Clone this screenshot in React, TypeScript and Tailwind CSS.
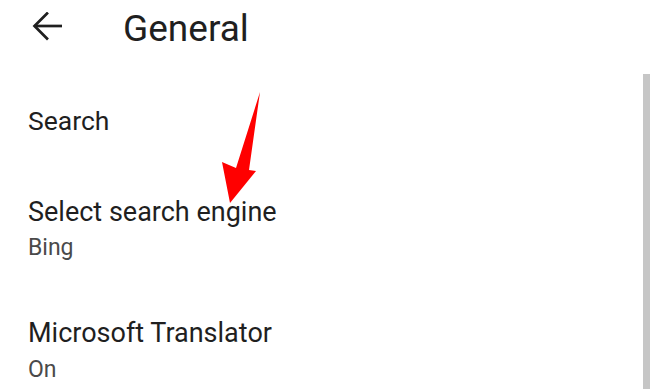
export default function App() {
  return (
    <div className="relative w-[650px] h-[389px] overflow-hidden bg-white text-[#1f1f1f]" style={{ fontFamily: 'Roboto, "Noto Sans", sans-serif' }}>
      <header className="flex items-start pt-[10px]">
        <svg className="ml-[32px] mt-[2px] block" width="32" height="30" viewBox="0 0 32 30" fill="none">
          <path d="M2.5 14H30" stroke="#1f1f1f" strokeWidth="2.7" />
          <path d="M15 1.5L2.5 14L15 26.5" stroke="#1f1f1f" strokeWidth="2.7" strokeLinecap="square" />
        </svg>
        <h1 className="ml-[59px] text-[37px] leading-[37px] font-normal">General</h1>
      </header>
      <main className="flex flex-col pl-[28px]">
        <div className="mt-[60.3px] text-[26.5px] leading-[27px]">Search</div>
        <div className="mt-[65px] text-[27px] leading-[27px]">Select search engine</div>
        <div className="mt-[9.3px] text-[23px] leading-[23px] text-[#4a4a4a]">Bing</div>
        <div className="mt-[61.7px] text-[27px] leading-[27px]">Microsoft Translator</div>
        <div className="mt-[10.3px] text-[23px] leading-[23px] text-[#4a4a4a]">On</div>
      </main>
      <div className="absolute right-0 top-[74px] bottom-0 w-[7px] bg-[#c6c6c6]" />
      <svg className="absolute left-0 top-0 pointer-events-none" width="650" height="389" viewBox="0 0 650 389">
        <polygon points="260,92 249,170 256,171 230,203 222,162 236,168" fill="#ff0000" />
      </svg>
    </div>
  );
}
